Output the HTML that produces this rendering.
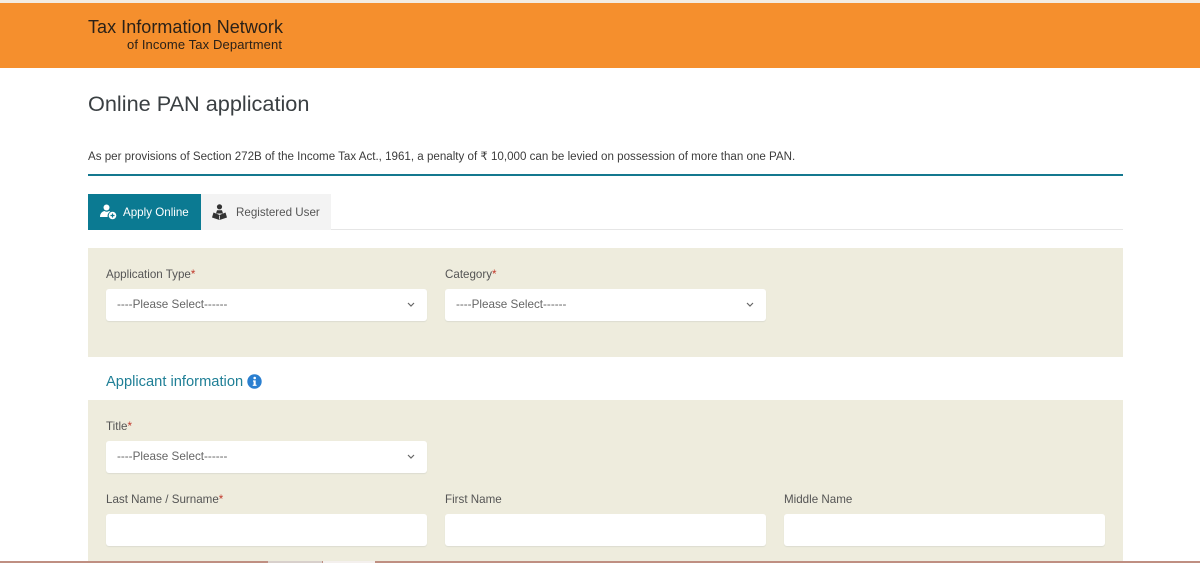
<!DOCTYPE html>
<html>
<head>
<meta charset="utf-8">
<style>
html,body{margin:0;padding:0;width:1200px;height:563px;overflow:hidden;background:#fff;font-family:"Liberation Sans",sans-serif}
.a{position:absolute;white-space:nowrap}
.lab{font-size:11.6px;color:#555;line-height:14px}
.lab i{color:#c0392b;font-style:normal}
.box{position:absolute;background:#fff;border-radius:3px;box-shadow:0 1px 1px #dcdcd0;height:32px}
.sel{font-size:11.7px;color:#666;line-height:32px;padding-left:11px;box-sizing:border-box}
.sel svg{position:absolute;right:12px;top:13px}
</style>
</head>
<body>
<div class="a" style="left:0;top:0;width:1200px;height:3px;background:#f3ece2"></div>
<div class="a" style="left:0;top:3px;width:1200px;height:65px;background:#f58f2d"></div>
<div class="a" style="left:88px;top:17px;font-size:18px;line-height:21px;color:#2a2118;letter-spacing:.04px">Tax Information Network</div>
<div class="a" style="left:127px;top:37px;font-size:13px;line-height:15px;color:#2a2118;letter-spacing:.12px">of Income Tax Department</div>

<div class="a" style="left:88px;top:91px;font-size:21.7px;line-height:25px;color:#3a3f42">Online PAN application</div>
<div class="a" style="left:88px;top:150px;font-size:11.58px;line-height:14px;color:#3c3c3c">As per provisions of Section 272B of the Income Tax Act., 1961, a penalty of ₹ 10,000 can be levied on possession of more than one PAN.</div>
<div class="a" style="left:88px;top:174px;width:1035px;height:2px;background:#14788f"></div>

<div class="a" style="left:88px;top:229px;width:1035px;height:1px;background:#e6e6e6"></div>
<div class="a" style="left:88px;top:194px;width:113px;height:36px;background:#0b7a92"></div>
<div class="a" style="left:201px;top:194px;width:130px;height:36px;background:#f3f3f3"></div>
<svg class="a" style="left:100px;top:204px" width="17" height="16" viewBox="0 0 17 16">
<circle cx="6.500" cy="3.500" r="3" fill="#fff"/>
<path d="M0 13c0-3.500 2-5.500 4.500-6 1.500 1 3 1 4.500 0 .5 .2 1 .5 1.200 .8-2 1-3 3.200-2.500 5.200z" fill="#fff"/>
<circle cx="12.500" cy="11.500" r="3.800" fill="#fff"/>
<path d="M10.500 11.500h4M12.500 9.500v4" stroke="#0b7a92" stroke-width="1.200"/>
</svg>
<div class="a" style="left:123px;top:206px;font-size:11.6px;line-height:14px;color:#fff">Apply Online</div>
<svg class="a" style="left:212px;top:204px" width="15" height="16" viewBox="0 0 15 16">
<circle cx="7.500" cy="2.800" r="2.600" fill="#333"/>
<path d="M4 9.500l1-3.200h5l1 3.200z" fill="#333"/>
<path d="M1.500 8.500l6 2.500 6-2.500 1.500 5-7.500 2.500L0 13.500z" fill="#333"/>
<path d="M7.500 11.500v4" stroke="#f3f3f3" stroke-width=".8"/>
</svg>
<div class="a" style="left:236px;top:206px;font-size:11.6px;line-height:14px;color:#555">Registered User</div>

<div class="a" style="left:88px;top:248px;width:1035px;height:109px;background:#eeecdd"></div>
<div class="a lab" style="left:106px;top:268px">Application Type<i>*</i></div>
<div class="a lab" style="left:445px;top:268px">Category<i>*</i></div>
<div class="box sel" style="left:106px;top:289px;width:321px">----Please Select------<svg width="8" height="6" viewBox="0 0 8 6"><path d="M1 1l3 3 3-3" fill="none" stroke="#666" stroke-width="1.200"/></svg></div>
<div class="box sel" style="left:445px;top:289px;width:321px">----Please Select------<svg width="8" height="6" viewBox="0 0 8 6"><path d="M1 1l3 3 3-3" fill="none" stroke="#666" stroke-width="1.200"/></svg></div>

<div class="a" style="left:106px;top:373px;font-size:14.7px;line-height:18px;color:#1f7f96">Applicant information</div>
<svg class="a" style="left:247px;top:374px" width="15" height="15" viewBox="0 0 15 15">
<circle cx="7.500" cy="7.500" r="7.200" fill="#2a7fd0"/>
<circle cx="7.700" cy="4" r="1.300" fill="#fff"/>
<path d="M6 6.400h2.700v4.300h.9v1.200H5.700v-1.200h.9V7.600H6z" fill="#fff"/>
</svg>

<div class="a" style="left:88px;top:400px;width:1035px;height:161px;background:#eeecdd"></div>
<div class="a lab" style="left:106px;top:420px">Title<i>*</i></div>
<div class="box sel" style="left:106px;top:441px;width:321px">----Please Select------<svg width="8" height="6" viewBox="0 0 8 6"><path d="M1 1l3 3 3-3" fill="none" stroke="#666" stroke-width="1.200"/></svg></div>
<div class="a lab" style="left:106px;top:493px">Last Name / Surname<i>*</i></div>
<div class="a lab" style="left:445px;top:493px">First Name</div>
<div class="a lab" style="left:784px;top:493px">Middle Name</div>
<div class="box" style="left:106px;top:514px;width:321px"></div>
<div class="box" style="left:445px;top:514px;width:321px"></div>
<div class="box" style="left:784px;top:514px;width:321px"></div>

<div class="a" style="left:0;top:561px;width:1200px;height:2px;background:#bf8f82"></div>
<div class="a" style="left:268px;top:561px;width:54px;height:2px;background:#d8d0cc"></div>
<div class="a" style="left:323px;top:561px;width:52px;height:2px;background:#f4f0ee"></div>
</body>
</html>
